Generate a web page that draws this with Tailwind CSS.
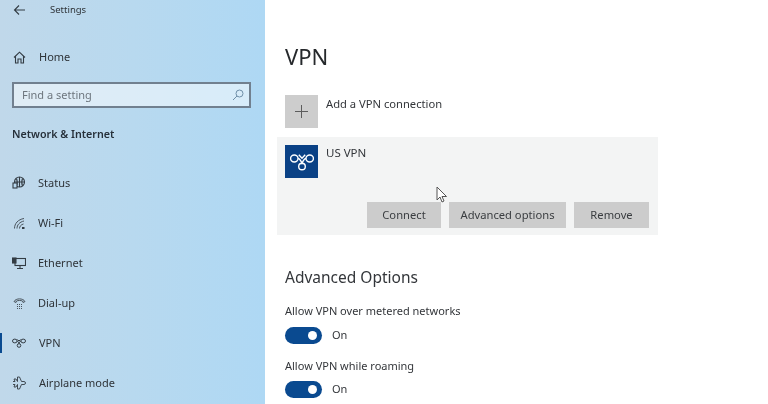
<!DOCTYPE html>
<html lang="en">
<head>
    <meta charset="UTF-8">
    <title>Settings</title>
    <script src="https://cdn.jsdelivr.net/npm/@tailwindcss/browser@4"></script>
</head>
<body>
<div class="flex w-[768px] h-[404px] overflow-hidden bg-white blur-[0.35px] font-['Noto_Sans',sans-serif] text-[#2e3338]">

    <!-- sidebar -->
    <div class="w-[265px] shrink-0 h-full flex flex-col bg-gradient-to-r from-[#c0d8ea] via-[#b8d9ef] to-[#aed8f4]">
        <div class="h-[20px] flex items-center pl-[13px]">
            <svg width="13" height="12" viewBox="0 0 13 12" fill="none" stroke="#333c44" stroke-width="1.1"><path d="M12 6H1.500M6 1.500L1.500 6L6 10.500"/></svg>
            <span class="ml-[24px] text-[9.500px]">Settings</span>
        </div>
        <div class="h-[34px] mt-[20px] flex items-center pl-[13px]">
            <svg width="13" height="13" viewBox="0 0 13 13" fill="none" stroke="#333c44" stroke-width="1.1"><path d="M1 6.500L6.500 1.200L12 6.500M2.500 5.500V12H5V8H8V12H10.500V5.500"/></svg>
            <span class="ml-[13px] text-[11px]">Home</span>
        </div>
        <div class="ml-[12px] w-[239px] mt-[8px] h-[26px] border-2 border-[#71808f] bg-white/50 flex items-center justify-between pl-[8px] pr-[5px]">
            <span class="text-[11px] text-[#6d767e]">Find a setting</span>
            <svg width="12" height="12" viewBox="0 0 12 12" fill="none" stroke="#6f8fa8" stroke-width="1"><circle cx="7.500" cy="4.500" r="3.500"/><path d="M5 7L1 11"/></svg>
        </div>
        <div class="mt-[18px] pl-[12px] text-[10.700px] font-semibold leading-[16px] text-[#26303a]">Network &amp; Internet</div>

        <div class="mt-[21px] flex flex-col">
            <div class="h-[40px] flex items-center pl-[12px]">
                <svg width="14" height="14" viewBox="0 0 14 14" fill="none" stroke="#333c44" stroke-width="1.1"><circle cx="7.500" cy="6" r="5"/><path d="M2.500 6H12.500M7.500 1V11M4.500 2.500C5.500 5 5.500 8 4.500 10M10.500 2.500C9.500 5 9.500 8 10.500 10"/><rect x="1" y="7" width="4" height="5" fill="#b9d8ee"/></svg>
                <span class="ml-[12px] text-[11px]">Status</span>
            </div>
            <div class="h-[40px] flex items-center pl-[13px]">
                <svg width="13" height="13" viewBox="0 0 13 13" fill="none" stroke="#4a545d" stroke-width="1"><path d="M1.500 11.500C1.500 6.500 5 2.500 11 1.500M4 11.500C4 8 6.500 5 11 4M6.500 11.500C6.500 9.500 8 7.500 10.500 7"/><rect x="9" y="10" width="2.500" height="2" fill="#333c44" stroke="none"/></svg>
                <span class="ml-[12px] text-[11px]">Wi-Fi</span>
            </div>
            <div class="h-[40px] flex items-center pl-[12px]">
                <svg width="14" height="13" viewBox="0 0 14 13" fill="none" stroke="#333c44" stroke-width="1.1"><rect x="3" y="1.500" width="10.500" height="7"/><path d="M8 8.500V11M5 11.500H11"/><rect x="0.500" y="1" width="3.500" height="5" fill="#333c44"/></svg>
                <span class="ml-[12px] text-[11px]">Ethernet</span>
            </div>
            <div class="h-[40px] flex items-center pl-[13px]">
                <svg width="13" height="13" viewBox="0 0 13 13" fill="none" stroke="#4a545d" stroke-width="1"><path d="M1 4.500C3 1 10 1 12 4.500L10 5.500L9.500 4C8 3.300 5 3.300 3.500 4L3 5.500Z"/><path d="M4 7.500H9M4 9.500H9M4 11.500H9" stroke-dasharray="1 1"/></svg>
                <span class="ml-[12px] text-[11px]">Dial-up</span>
            </div>
            <div class="relative h-[40px] flex items-center pl-[12px]">
                <div class="absolute left-0 top-[10px] w-[2px] h-[20px] bg-[#0a4a90]"></div>
                <svg width="14" height="10" viewBox="0 0 14 10" fill="none" stroke="#333c44" stroke-width="1"><ellipse cx="2.800" cy="3" rx="2.300" ry="1.900"/><ellipse cx="11.200" cy="3" rx="2.300" ry="1.900"/><circle cx="7" cy="7.500" r="1.800"/><path d="M5 3C6 3 6.500 4.500 7 5.700C7.500 4.500 8 3 9 3M5.500 1.500L7 3L8.500 1.500"/></svg>
                <span class="ml-[13px] text-[11px]">VPN</span>
            </div>
            <div class="h-[40px] flex items-center pl-[12px]">
                <svg width="14" height="14" viewBox="0 0 14 14" fill="none" stroke="#333c44" stroke-width="0.9"><path d="M1 5.500H3L2 3H4L5.500 5.500V1H7.500L9.500 5.500H12C14 5.500 14 8.500 12 8.500H9.500L7.500 13H5.500V8.500L4 11H2L3 8.500H1"/></svg>
                <span class="ml-[13px] text-[11px]">Airplane mode</span>
            </div>
        </div>
    </div>

    <!-- main -->
    <div class="flex-1 flex flex-col pl-[12px]">
        <div class="pl-[8px] mt-[42px] text-[22px] leading-[28px] text-[#26292c]">VPN</div>

        <div class="pl-[8px] mt-[25px] flex">
            <div class="w-[33px] h-[33px] bg-[#cdcdcd] flex items-center justify-center">
                <svg width="13" height="13" viewBox="0 0 13 13" stroke="#5c5c5c" stroke-width="1"><path d="M6.500 0V13M0 6.500H13"/></svg>
            </div>
            <span class="ml-[8px] text-[11.200px] leading-[18px] text-[#33363a]">Add a VPN connection</span>
        </div>

        <div class="mt-[9px] w-[381px] h-[98px] bg-[#f3f4f4] flex flex-col pl-[8px] pr-[9px] pt-[8px]">
            <div class="flex">
                <div class="w-[33px] h-[33px] bg-[#0a4185] flex items-center justify-center">
                    <svg width="24" height="18" viewBox="0 0 24 18" fill="none" stroke="#ffffff" stroke-width="1.400"><ellipse cx="4.300" cy="5.500" rx="3.700" ry="3.500"/><ellipse cx="19.700" cy="5.500" rx="3.700" ry="3.500"/><circle cx="12" cy="13.500" r="3.300"/><path d="M8 5.500C10 5.500 11 8 12 10.200C13 8 14 5.500 16 5.500M8.800 1.800L12 5.300L15.200 1.800"/></svg>
                </div>
                <span class="ml-[8px] text-[11.500px] leading-[16px] text-[#33363a]">US VPN</span>
            </div>
            <div class="mt-[24px] flex justify-end gap-[8px] text-[11.200px] text-[#3a3d40]">
                <div class="w-[74px] h-[26px] bg-[#cccccc] flex items-center justify-center">Connect</div>
                <div class="w-[117px] h-[26px] bg-[#cccccc] flex items-center justify-center">Advanced options</div>
                <div class="w-[75px] h-[26px] bg-[#cccccc] flex items-center justify-center">Remove</div>
            </div>
        </div>

        <div class="pl-[8px] mt-[31px] text-[15.500px] leading-[22px] text-[#33363a]">Advanced Options</div>
        <div class="pl-[8px] mt-[15px] text-[11px] leading-[16px] text-[#33363a]">Allow VPN over metered networks</div>
        <div class="pl-[8px] mt-[8px] flex items-center">
            <div class="w-[37px] h-[17px] rounded-full bg-[#0a4a90] flex items-center justify-end pr-[5px]"><div class="w-[9px] h-[9px] rounded-full bg-white"></div></div>
            <span class="ml-[10px] text-[11px] text-[#33363a]">On</span>
        </div>
        <div class="pl-[8px] mt-[14px] text-[11px] leading-[16px] text-[#33363a]">Allow VPN while roaming</div>
        <div class="pl-[8px] mt-[7px] flex items-center">
            <div class="w-[37px] h-[17px] rounded-full bg-[#0a4a90] flex items-center justify-end pr-[5px]"><div class="w-[9px] h-[9px] rounded-full bg-white"></div></div>
            <span class="ml-[10px] text-[11px] text-[#33363a]">On</span>
        </div>
    </div>
</div>

<!-- mouse pointer -->
<svg class="absolute left-[436px] top-[186px]" width="12" height="18" viewBox="0 0 12 18" fill="#ffffff" stroke="#555555" stroke-width="1"><path d="M1 1V14L4 11L6 16L8 15L6 10.500H10.500Z"/></svg>
</body>
</html>
